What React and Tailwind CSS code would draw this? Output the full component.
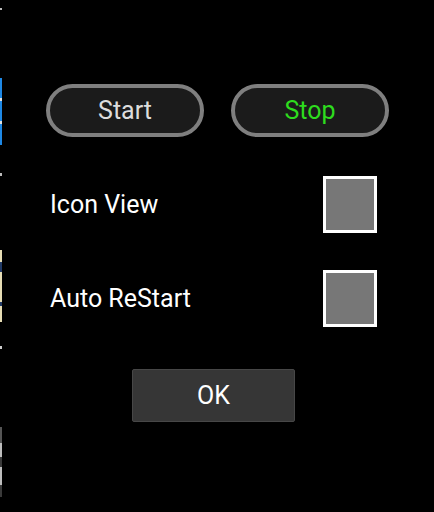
export default function App() {
  const font = { fontFamily: 'Roboto, "Liberation Sans", sans-serif' }
  return (
    <div className="w-[434px] h-[512px] bg-black flex overflow-hidden" style={font}>
      {/* sliver of the screen behind the dialog */}
      <div className="w-[2px] flex flex-col shrink-0">
        <div className="h-[8px]" />
        <div className="h-[2px] bg-[#bbbbbb]" />
        <div className="h-[68px]" />
        <div className="h-[20px] bg-[#1e88e5]" />
        <div className="h-[3px] bg-[#e0e0e0]" />
        <div className="h-[20px] bg-[#1e88e5]" />
        <div className="h-[3px] bg-[#e0e0e0]" />
        <div className="h-[21px] bg-[#1e88e5]" />
        <div className="h-[28px]" />
        <div className="h-[3px] bg-[#bbbbbb]" />
        <div className="h-[74px]" />
        <div className="h-[12px] bg-[#e6dcb4]" />
        <div className="h-[10px] bg-[#213a66]" />
        <div className="h-[30px] bg-[#e6dcb4]" />
        <div className="h-[4px] bg-[#213a66]" />
        <div className="h-[16px] bg-[#e6dcb4]" />
        <div className="h-[24px]" />
        <div className="h-[3px] bg-[#cccccc]" />
        <div className="h-[78px]" />
        <div className="h-[16px] bg-[#555555]" />
        <div className="h-[14px] bg-[#bdbdbd]" />
        <div className="h-[10px] bg-[#3a3a3a]" />
        <div className="h-[18px] bg-[#bdbdbd]" />
        <div className="h-[12px] bg-[#3a3a3a]" />
      </div>

      <div className="flex-1 pl-[44px] pt-[84px]">
        <div className="flex gap-[27px]">
          <button className="w-[158px] h-[53px] rounded-full border-4 border-[#7f7f7f] bg-[#1b1b1b] text-[25px] text-[#dddddd] flex items-center justify-center">
            Start
          </button>
          <button className="w-[158px] h-[53px] rounded-full border-4 border-[#7f7f7f] bg-[#1b1b1b] text-[25px] text-[#2edc1e] flex items-center justify-center">
            Stop
          </button>
        </div>

        <div className="mt-[39px] w-[331px] flex items-center justify-between">
          <span className="ml-[4px] text-[25px] text-white">Icon View</span>
          <div className="w-[54px] h-[57px] border-[3px] border-white bg-[#777777]" />
        </div>

        <div className="mt-[37px] w-[331px] flex items-center justify-between">
          <span className="ml-[4px] text-[25px] text-white">Auto ReStart</span>
          <div className="w-[54px] h-[57px] border-[3px] border-white bg-[#777777]" />
        </div>

        <button className="mt-[42px] ml-[86px] w-[163px] h-[53px] rounded-[2px] border border-[#474747] bg-[#363636] text-[25px] text-white flex items-center justify-center">
          OK
        </button>
      </div>
    </div>
  )
}
